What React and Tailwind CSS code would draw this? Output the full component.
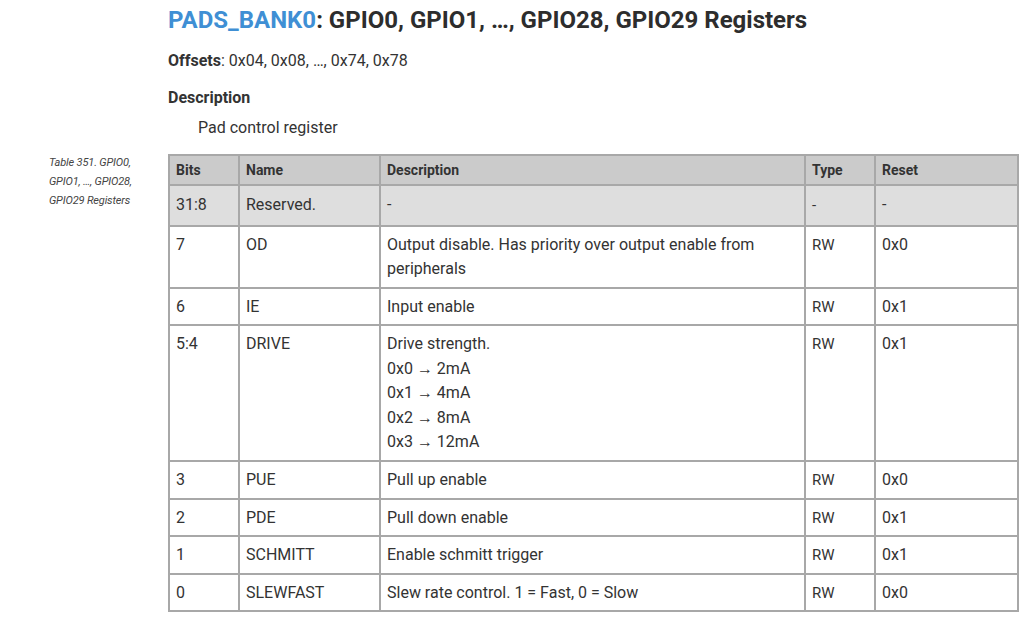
const rows = [
    { bits: '31:8', name: 'Reserved.', desc: ['-'], type: '-', reset: '-', reserved: true },
    { bits: '7', name: 'OD', desc: ['Output disable. Has priority over output enable from', 'peripherals'], type: 'RW', reset: '0x0' },
    { bits: '6', name: 'IE', desc: ['Input enable'], type: 'RW', reset: '0x1' },
    { bits: '5:4', name: 'DRIVE', desc: ['Drive strength.', '0x0 → 2mA', '0x1 → 4mA', '0x2 → 8mA', '0x3 → 12mA'], type: 'RW', reset: '0x1' },
    { bits: '3', name: 'PUE', desc: ['Pull up enable'], type: 'RW', reset: '0x0' },
    { bits: '2', name: 'PDE', desc: ['Pull down enable'], type: 'RW', reset: '0x1' },
    { bits: '1', name: 'SCHMITT', desc: ['Enable schmitt trigger'], type: 'RW', reset: '0x1' },
    { bits: '0', name: 'SLEWFAST', desc: ['Slew rate control. 1 = Fast, 0 = Slow'], type: 'RW', reset: '0x0' },
];

export default function App() {
    return (
        <div className="w-[1035px] h-[622px] overflow-hidden bg-white text-[#333] font-['Roboto',sans-serif]">
            <div className="pl-[168px] pt-[5px]">
                <h2 className="text-[24px] leading-[30px] font-bold text-[#2d2d2d]">
                    <span className="text-[#3f8fd4]">PADS_BANK0</span>: GPIO0, GPIO1, …, GPIO28, GPIO29 Registers
                </h2>
                <p className="mt-[15px] text-[16px] leading-[22px]">
                    <span className="font-bold">Offsets</span>: 0x04, 0x08, …, 0x74, 0x78
                </p>
                <p className="mt-[15px] text-[16px] leading-[22px] font-bold">Description</p>
                <p className="mt-[8px] pl-[30px] text-[16px] leading-[22px]">Pad control register</p>
            </div>

            <div className="flex mt-[15px]">
                {/* table caption */}
                <div className="w-[168px] shrink-0 pl-[49px] pr-[30px] -mt-[1px] text-[11px] leading-[19px] italic tracking-[-0.15px] text-[#444]">
                    Table 351. GPIO0, GPIO1, …, GPIO28, GPIO29 Registers
                </div>

                <table className="w-[849px] border-collapse border-2 border-[#a8a8a8] table-fixed">
                    <colgroup>
                        <col className="w-[70px]" />
                        <col className="w-[141px]" />
                        <col className="w-[425px]" />
                        <col className="w-[70px]" />
                        <col className="w-[143px]" />
                    </colgroup>
                    <thead>
                        <tr className="bg-[#cbcbcb] text-[14px] leading-[20px] font-bold text-left">
                            <th className="border-2 border-[#a8a8a8] px-[6px] py-[4px]">Bits</th>
                            <th className="border-2 border-[#a8a8a8] px-[6px] py-[4px]">Name</th>
                            <th className="border-2 border-[#a8a8a8] px-[6px] py-[4px]">Description</th>
                            <th className="border-2 border-[#a8a8a8] px-[6px] py-[4px]">Type</th>
                            <th className="border-2 border-[#a8a8a8] px-[6px] py-[4px]">Reset</th>
                        </tr>
                    </thead>
                    <tbody>
                        {rows.map((r) => (
                            <tr key={r.bits} className={r.reserved ? 'bg-[#dedede]' : 'bg-white'}>
                                <td className={`border-2 border-[#a8a8a8] px-[6px] align-top text-[16px] leading-[24px] ${r.reserved ? 'pt-[7px] pb-[8px]' : 'pt-[6px] pb-[5.5px]'}`}>{r.bits}</td>
                                <td className={`border-2 border-[#a8a8a8] px-[6px] align-top text-[16px] leading-[24px] ${r.reserved ? 'pt-[7px] pb-[8px]' : 'pt-[6px] pb-[5.5px]'}`}>{r.name}</td>
                                <td className={`border-2 border-[#a8a8a8] px-[6px] align-top text-[16px] leading-[24px] ${r.reserved ? 'pt-[7px] pb-[8px] text-[13px]' : 'pt-[6px] pb-[5.5px]'}`}>
                                    {r.desc.map((d) => (
                                        <div key={d} className={r.desc.length > 2 ? 'leading-[24.5px]' : ''}>{d}</div>
                                    ))}
                                </td>
                                <td className={`border-2 border-[#a8a8a8] px-[6px] align-top text-[15px] leading-[24px] ${r.reserved ? 'pt-[7px] pb-[8px] text-[13px]' : 'pt-[6px] pb-[5.5px]'}`}>{r.type}</td>
                                <td className={`border-2 border-[#a8a8a8] px-[6px] align-top text-[16px] leading-[24px] ${r.reserved ? 'pt-[7px] pb-[8px] text-[13px]' : 'pt-[6px] pb-[5.5px]'}`}>{r.reset}</td>
                            </tr>
                        ))}
                    </tbody>
                </table>
            </div>
        </div>
    );
}
